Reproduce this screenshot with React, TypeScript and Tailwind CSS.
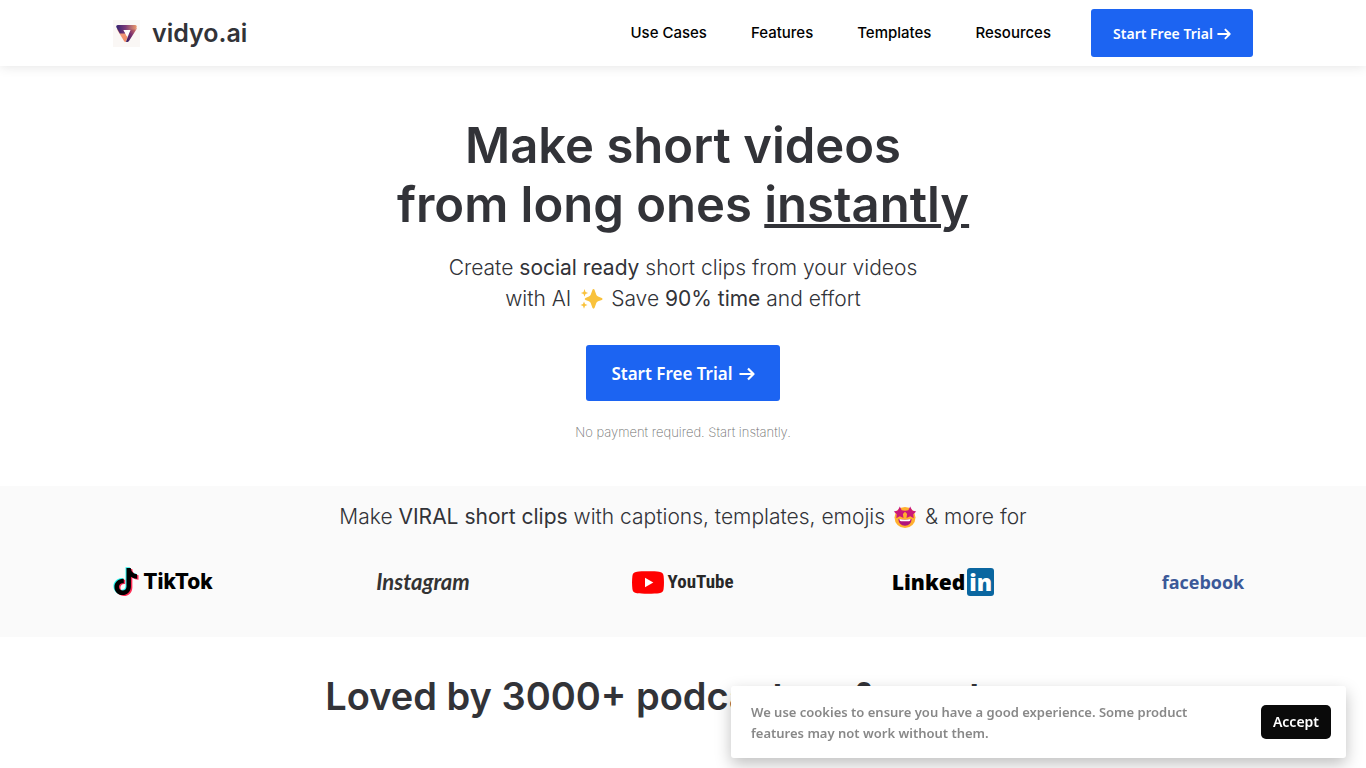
import { ReactNode } from 'react';

const NAV_LINKS = ['Use Cases', 'Features', 'Templates', 'Resources'];

const ArrowIcon = ({ className }: { className: string }) => (
  <svg viewBox="0 0 16 16" fill="none" stroke="currentColor" strokeWidth="2.200" className={className} aria-hidden="true">
    <path d="M0.500 8h14M9 2.500 14.500 8 9 13.500" strokeLinejoin="round" />
  </svg>
);

const SparklesIcon = () => (
  <svg viewBox="0 0 24 24" fill="#f9c23c" className="mx-0.5 inline-block size-6 align-[-5px]" aria-label="sparkles">
    <path d="M14.500 2c.6 0 .9.4 1.100 1l1.700 4.700c.3.9.9 1.500 1.800 1.800l3.700 1.400c1 .3 1 1.700 0 2l-3.700 1.400c-.9.3-1.500.9-1.800 1.800L15.600 20.800c-.3 1.100-1.900 1.100-2.200 0L11.700 16.100c-.3-.9-.9-1.500-1.800-1.800L6.500 12.900c-1-.3-1-1.700 0-2l3.400-1.400c.9-.3 1.500-.9 1.800-1.800L13.400 3c.2-.6.500-1 1.100-1Z" />
    <path d="M5.500 2 6.500 4.900l2.600 1-2.600 1-1 2.800-1-2.800-2.600-1 2.600-1ZM5 14.500l1 2.600 2.500 1-2.500 1L5 21.800l-1-2.700-2.500-1 2.500-1Z" />
  </svg>
);

const StarStruckIcon = () => (
  <svg viewBox="0 0 24 24" className="mx-0.5 inline-block size-6 align-[-5px]" aria-label="star-struck">
    <circle cx="12" cy="12.500" r="10.500" fill="#ffb02e" />
    <path
      d="m6.800 1.500 1.900 3.800 4 .7-2.800 3 .6 4-3.700-1.700-3.500 1.900.4-4L.8 6.400l4-.8ZM17.200 1.500l2 4.100 4 .8-2.900 2.800.4 4-3.500-1.900-3.700 1.700.6-4-2.800-3 4-.7Z"
      fill="#ca1878"
    />
    <path d="M5.500 13.800c2 .7 4.200 1 6.500 1s4.500-.3 6.500-1c.3 4-2.600 7-6.500 7s-6.800-3-6.500-7Z" fill="#b0137c" />
    <path d="M6.500 14.100c3.600.9 7.400.9 11 0-.1 1.500-.6 2.200-1.500 2.200H8c-.9 0-1.400-.7-1.500-2.200Z" fill="#fff" />
  </svg>
);

const VidyoMark = () => (
  <svg viewBox="0 0 27 27" className="size-[27px]" aria-hidden="true">
    <defs>
      <linearGradient id="vidyo-top" x1="0" x2="1">
        <stop offset="0" stopColor="#33206f" />
        <stop offset="0.45" stopColor="#7b3a78" />
        <stop offset="1" stopColor="#ee9a68" />
      </linearGradient>
      <linearGradient id="vidyo-left" x1="0" x2="1" y1="0" y2="1">
        <stop offset="0" stopColor="#f0a08a" />
        <stop offset="1" stopColor="#f08a62" />
      </linearGradient>
      <linearGradient id="vidyo-right" x1="1" x2="0" y1="0" y2="1">
        <stop offset="0" stopColor="#e9825e" />
        <stop offset="0.5" stopColor="#7a2f6e" />
        <stop offset="1" stopColor="#2c175e" />
      </linearGradient>
    </defs>
    <rect width="27" height="27" fill="#faf7f5" />
    <path d="M5 8.500 10 10l4.500 7-1.500 4.800c-.8.300-1.500-.1-2-.8L4 9.500Z" fill="url(#vidyo-left)" />
    <path d="M5 5h17c1.500 0 2.200 1.200 1.500 2.500L22 10H10.500l2 3.500H6.800L3.500 7.500C2.800 6.200 3.500 5 5 5Z" fill="url(#vidyo-top)" />
    <path d="M17.500 9.500h4.800l1.200-2c.3.600.2 1.200-.2 1.900L16 21c-.8 1.200-1.900 1.300-3 .7Z" fill="url(#vidyo-right)" />
    <path d="M10.500 10h7l-3.500 6.500Z" fill="#fff" />
  </svg>
);

const NOTE_PATH =
  'M14 1h4.500c.3 3.600 2.600 6.200 6.500 6.500v4.600c-2.400 0-4.500-.7-6.400-2v10c0 5.300-4 9-8.800 9S1.500 25.400 1.500 20.600c0-5 4.200-9 9.700-8.500v4.700c-2.800-.6-5 1.200-5 3.700 0 2.200 1.600 3.900 3.800 3.900 2.400 0 4-1.700 4-4.200Z';

const TikTokLogo = () => (
  <>
    <svg viewBox="0 0 27 31" className="h-[30px] w-[26px] shrink-0" aria-hidden="true">
      <path d={NOTE_PATH} transform="translate(-1 -0.800)" fill="#25f4ee" />
      <path d={NOTE_PATH} transform="translate(1.500 1)" fill="#fe2c55" />
      <path d={NOTE_PATH} />
    </svg>
    <span className="ml-1 text-[21px] font-extrabold text-black">TikTok</span>
  </>
);

const YouTubeLogo = () => (
  <>
    <svg viewBox="0 0 32 23" className="h-[23px] w-8 shrink-0" aria-hidden="true">
      <path
        d="M5 .7C9 .1 23 .1 27 .7c3 .4 4.300 1.600 4.600 4.300.5 4 .5 9 0 13-.3 2.700-1.600 3.900-4.600 4.300-4 .6-18 .6-22 0C2 21.900.7 20.700.4 18c-.5-4-.5-9 0-13C.7 2.300 2 1.100 5 .7Z"
        fill="red"
      />
      <path d="m13 6.700 8.300 4.800L13 16.300Z" fill="#fff" />
    </svg>
    <span className="ml-[3px] font-['Liberation_Sans_Narrow','Roboto_Condensed','Roboto',sans-serif] text-[19px] font-bold text-[#282828]">
      YouTube
    </span>
  </>
);

const LinkedInLogo = () => (
  <>
    <span className="font-['Open_Sans',sans-serif] text-[21px] font-extrabold text-black">Linked</span>
    <span className="ml-0.5 flex h-7 w-[27px] shrink-0 items-center justify-center rounded-[3px] bg-[#0a66a0] font-['Open_Sans',sans-serif] text-[23px] font-extrabold text-white">
      in
    </span>
  </>
);

const LogoCell = ({ children }: { children: ReactNode }) => (
  <li className="flex h-[30px] w-[100px] items-center justify-center leading-[30px] whitespace-nowrap">{children}</li>
);

const Header = () => (
  <header className="sticky top-0 z-10 bg-white shadow-[0_0_12px_rgba(0,0,0,0.12)]">
    <div className="mx-auto flex h-[66px] max-w-[1140px] items-center justify-between">
      <a href="#" className="flex items-center gap-3 text-[25px] leading-8 font-semibold text-[#323338]">
        <VidyoMark />
        vidyo.ai
      </a>
      <div className="flex items-center gap-10">
        <nav className="flex gap-11 text-[15px] font-medium text-black">
          {NAV_LINKS.map((label) => (
            <a key={label} href="#">
              {label}
            </a>
          ))}
        </nav>
        <button className="flex h-12 w-[162px] items-center justify-center gap-1 rounded-[3px] bg-[#1c64f2] pt-0.5 font-['Noto_Sans',sans-serif] text-sm font-semibold text-white">
          Start Free Trial
          <ArrowIcon className="size-[14px]" />
        </button>
      </div>
    </div>
  </header>
);

const Hero = () => (
  <section className="flex flex-col items-center pt-[50px] pb-11 text-center">
    <h1 className="text-[49px] leading-[59px] font-semibold text-[#323338]">
      Make short videos
      <br />
      from long ones <span className="underline decoration-4">instantly</span>
    </h1>
    <p className="mt-[18px] text-[21px] leading-[31px] font-light text-[#323338]">
      Create <span className="font-normal">social ready</span> short clips from your videos
      <br />
      with AI <SparklesIcon /> Save <span className="font-normal">90% time</span> and effort
    </p>
    <button className="mt-[31px] flex h-14 w-[194px] items-center justify-center gap-1.5 rounded-[3px] bg-[#1c64f2] pt-0.5 font-['Noto_Sans',sans-serif] text-[17px] font-semibold text-white">
      Start Free Trial
      <ArrowIcon className="size-4" />
    </button>
    <p className="mt-[21px] text-[13px] leading-5 font-extralight text-[#6f6f6f]">
      No payment required. Start instantly.
    </p>
  </section>
);

const Platforms = () => (
  <section className="bg-[#fafafa] pt-4 pb-10">
    <p className="text-center text-[21px] leading-[30px] font-light text-[#323338]">
      Make <span className="font-normal">VIRAL short clips</span> with captions, templates, emojis <StarStruckIcon /> &amp;
      more for
    </p>
    <ul className="mx-auto mt-[35px] flex max-w-[1140px] justify-between">
      <LogoCell>
        <TikTokLogo />
      </LogoCell>
      <LogoCell>
        <span className="font-['Lato',sans-serif] text-[22px] font-bold text-[#333] italic">Instagram</span>
      </LogoCell>
      <LogoCell>
        <YouTubeLogo />
      </LogoCell>
      <LogoCell>
        <LinkedInLogo />
      </LogoCell>
      <LogoCell>
        <span className="font-['Open_Sans',sans-serif] text-[18px] font-bold text-[#3b5998]">facebook</span>
      </LogoCell>
    </ul>
  </section>
);

const CookieBanner = () => (
  <aside className="fixed right-5 bottom-2.5 z-20 flex h-[72px] w-[615px] max-w-full items-center justify-between rounded-[3px] bg-white pr-[15px] pl-5 font-['Noto_Sans',sans-serif] font-semibold shadow-[0_6px_16px_rgba(0,0,0,0.25)]">
    <p className="w-[460px] pt-0.5 text-[13px] leading-[21px] text-[#888]">
      We use cookies to ensure you have a good experience. Some product features may not work without them.
    </p>
    <button className="h-[34px] w-[70px] rounded-[5px] bg-[#0a0a0a] text-sm text-white">Accept</button>
  </aside>
);

const App = () => (
  <div className="min-h-screen bg-white font-['Inter',sans-serif]">
    <Header />
    <main>
      <Hero />
      <Platforms />
      <section className="pt-[34px] pb-12">
        <h2 className="text-center text-[38px] leading-[50px] font-semibold text-[#323338]">
          Loved by 3000+ podcasters &amp; creators
        </h2>
      </section>
    </main>
    <CookieBanner />
  </div>
);

export default App;
